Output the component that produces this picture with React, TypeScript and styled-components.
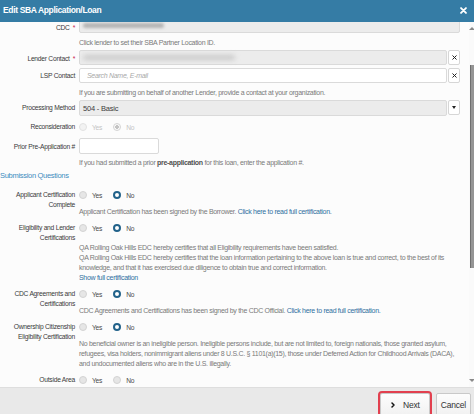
import styled, { createGlobalStyle } from 'styled-components';
import { ChevronRight } from 'lucide-react';

const GlobalStyle = createGlobalStyle`
  html, body {
    margin: 0;
    padding: 0;
    background: #fcfcfc;
  }
  body {
    font-family: "Liberation Sans", Arial, sans-serif;
  }
`;

const Dialog = styled.div`
  width: 474px;
  height: 414px;
  display: flex;
  flex-direction: column;
  overflow: hidden;
  background: #fcfcfc;
`;

const Header = styled.div`
  height: 22px;
  flex-shrink: 0;
  box-sizing: border-box;
  padding: 0 7px 2px 3px;
  display: flex;
  align-items: center;
  justify-content: space-between;
  background: #357ca5;
`;

const Title = styled.h4`
  margin: 0;
  color: #fff;
  font-size: 8.5px;
  letter-spacing: -0.35px;
  font-weight: 700;
`;

const Main = styled.div`
  flex: 1;
  min-height: 0;
  display: flex;
`;

const Body = styled.div`
  flex: 1;
  overflow: hidden;
  padding-right: 9px;
`;

const Content = styled.div`
  margin-top: -4px;
`;

const Scrollbar = styled.div`
  width: 5px;
  display: flex;
  flex-direction: column;
  align-items: flex-end;
  background: #fafafa;
`;

const Arrow = styled.span<{ $down?: boolean }>`
  width: 0;
  height: 0;
  margin-right: -1px;
  border-left: 3px solid transparent;
  border-right: 3px solid transparent;
  ${p => (p.$down ? 'border-top: 3px solid #8a8a8a;' : 'border-bottom: 3px solid #8a8a8a;')}
  margin-top: ${p => (p.$down ? 'auto' : '5px')};
  margin-bottom: ${p => (p.$down ? '5px' : '0')};
`;

const Thumb = styled.span<{ $top: number; $height: number }>`
  width: 4px;
  box-sizing: border-box;
  margin-top: ${p => p.$top}px;
  height: ${p => p.$height}px;
  background: #959595;
  border-left: 1px solid #6f6f6f;
`;

const Row = styled.div<{ $mt: number }>`
  display: grid;
  grid-template-columns: 75px 1fr;
  column-gap: 4px;
  margin-top: ${p => p.$mt}px;
`;

const Label = styled.div<{ $pt: number }>`
  padding-top: ${p => p.$pt}px;
  text-align: right;
  font-size: 6.7px;
  letter-spacing: -0.25px;
  line-height: 10.5px;
  color: #3a3a3a;
`;

const Required = styled.span`
  color: #c7254e;
  margin-left: 3px;
`;

const Control = styled.div`
  display: flex;
  flex-direction: column;
  min-width: 0;
`;

const Group = styled.div`
  display: flex;
  gap: 1px;
`;

const Field = styled.div<{ $filled?: boolean; $width?: number; $height?: number }>`
  box-sizing: border-box;
  height: ${p => p.$height ?? 15}px;
  flex: ${p => (p.$width ? 'none' : '1 1 auto')};
  ${p => (p.$width ? `width: ${p.$width}px;` : '')}
  min-width: 0;
  padding: 0 3px;
  display: flex;
  align-items: center;
  border: 1px solid #dadada;
  border-radius: 2px;
  background: ${p => (p.$filled ? '#ececec' : '#fff')};
  font-size: 7.5px;
  letter-spacing: -0.2px;
  color: #3c3c3c;
`;

const Addon = styled.div`
  box-sizing: border-box;
  width: 12px;
  height: 15px;
  flex: none;
  display: flex;
  align-items: center;
  justify-content: center;
  border: 1px solid #d6d6d6;
  border-radius: 2px;
  background: #fff;
`;

const Caret = styled.span`
  width: 0;
  height: 0;
  border-left: 2px solid transparent;
  border-right: 2px solid transparent;
  border-top: 3px solid #222;
`;

const Placeholder = styled.span`
  margin-left: 4px;
  font-style: italic;
  font-size: 7px;
  letter-spacing: -0.3px;
  color: #a9a9a9;
`;

const Redacted = styled.span<{ $width: number; $shade: string; $blur: number }>`
  display: block;
  width: ${p => p.$width}px;
  height: 5px;
  border-radius: 3px;
  background: ${p => p.$shade};
  filter: blur(${p => p.$blur}px);
`;

const Help = styled.div<{ $mt: number }>`
  margin-top: ${p => p.$mt}px;
  font-size: 7px;
  letter-spacing: -0.3px;
  line-height: 10px;
  color: #7a7a7a;
`;

const Strong = styled.b`
  color: #505050;
`;

const Link = styled.a`
  color: #2f6f9f;
  text-decoration: none;
`;

const Heading = styled.div<{ $mt: number }>`
  margin-top: ${p => p.$mt}px;
  font-size: 7.5px;
  letter-spacing: -0.3px;
  line-height: 12px;
  color: #3d8dbf;
`;

const Radios = styled.div`
  height: 14px;
  display: flex;
  align-items: center;
`;

const Option = styled.label`
  display: flex;
  align-items: center;
  gap: 5px;
  margin-right: 11px;
`;

const Circle = styled.span<{ $checked?: boolean; $disabled?: boolean }>`
  box-sizing: border-box;
  width: 8px;
  height: 8px;
  border-radius: 50%;
  ${p => {
    if (p.$disabled && p.$checked)
      return 'border: 1px solid #d4d4d4; background: radial-gradient(circle, #c4c4c4 0 1.6px, #fafafa 2px);';
    if (p.$disabled) return 'border: 1px solid #e2e2e2; background: #f2f2f2;';
    if (p.$checked) return 'border: 2.4px solid #22628a; background: #fff;';
    return 'border: 1px solid #d3d3d3; background: #e6e6e6;';
  }}
`;

const OptionText = styled.span<{ $disabled?: boolean }>`
  font-size: 6.7px;
  letter-spacing: -0.25px;
  color: ${p => (p.$disabled ? '#c4c4c4' : '#4a4a4a')};
`;

const Footer = styled.div`
  height: 27px;
  flex-shrink: 0;
  box-sizing: border-box;
  padding: 5px 3px 0 0;
  display: flex;
  align-items: flex-start;
  justify-content: flex-end;
  gap: 6px;
  background: #e9e9e9;
  border-top: 1px solid #dedede;
`;

const Button = styled.button<{ $highlight?: boolean }>`
  height: 24px;
  padding: 0 ${p => (p.$highlight ? 9 : 4)}px 0 ${p => (p.$highlight ? 8 : 4)}px;
  display: flex;
  align-items: center;
  gap: 6px;
  border: 1px solid #c9c9c9;
  border-radius: 2px;
  background: linear-gradient(#fdfdfd, #f1f1f1);
  font-family: inherit;
  font-size: 8.5px;
  letter-spacing: -0.2px;
  color: #333;
  ${p => (p.$highlight ? 'outline: 2px solid #e2404f; outline-offset: 0;' : '')}
`;

const Cross = ({ size, color, weight }: { size: number; color: string; weight: number }) => (
  <svg width={size} height={size} viewBox="0 0 10 10">
    <path d="M1.5 1.5 L8.5 8.5 M8.5 1.5 L1.5 8.5" stroke={color} strokeWidth={weight} strokeLinecap="round" />
  </svg>
);

const Radio = ({ checked, disabled, text }: { checked?: boolean; disabled?: boolean; text: string }) => (
  <Option>
    <Circle $checked={checked} $disabled={disabled} />
    <OptionText $disabled={disabled}>{text}</OptionText>
  </Option>
);

const YesNo = ({ yes, disabled }: { yes?: boolean; disabled?: boolean }) => (
  <Radios>
    <Radio text="Yes" checked={yes === true} disabled={disabled} />
    <Radio text="No" checked={yes === false} disabled={disabled} />
  </Radios>
);

const App = () => (
  <>
    <GlobalStyle />
    <Dialog>
      <Header>
        <Title>Edit SBA Application/Loan</Title>
        <Cross size={7} color="#fff" weight={2.6} />
      </Header>
      <Main>
        <Body>
          <Content>
            <Row $mt={0}>
              <Label $pt={4.5}>
                CDC<Required>*</Required>
              </Label>
              <Control>
                <Field $filled>
                  <Redacted $width={81} $shade="#b3b3b3" $blur={1.5} />
                </Field>
                <Help $mt={5}>Click lender to set their SBA Partner Location ID.</Help>
              </Control>
            </Row>

            <Row $mt={2}>
              <Label $pt={3.5}>
                Lender Contact<Required>*</Required>
              </Label>
              <Group>
                <Field $filled>
                  <Redacted $width={152} $shade="#c9c9c9" $blur={2.5} />
                </Field>
                <Addon>
                  <Cross size={5} color="#222" weight={2} />
                </Addon>
              </Group>
            </Row>

            <Row $mt={3}>
              <Label $pt={2.5}>LSP Contact</Label>
              <Control>
                <Group>
                  <Field>
                    <Placeholder>Search Name, E-mail</Placeholder>
                  </Field>
                  <Addon>
                    <Cross size={5} color="#222" weight={2} />
                  </Addon>
                </Group>
                <Help $mt={5}>
                  If you are submitting on behalf of another Lender, provide a contact at your organization.
                </Help>
              </Control>
            </Row>

            <Row $mt={2}>
              <Label $pt={3}>Processing Method</Label>
              <Group>
                <Field $filled $height={16}>504 - Basic</Field>
                <Addon>
                  <Caret />
                </Addon>
              </Group>
            </Row>

            <Row $mt={4}>
              <Label $pt={1.5}>Reconsideration</Label>
              <YesNo yes={false} disabled />
            </Row>

            <Row $mt={4}>
              <Label $pt={3.5}>Prior Pre-Application #</Label>
              <Control>
                <Field $width={80} $height={16} />
                <Help $mt={4}>
                  If you had submitted a prior <Strong>pre-application</Strong> for this loan, enter the application #.
                </Help>
              </Control>
            </Row>

            <Heading $mt={2}>Submission Questions</Heading>

            <Row $mt={6}>
              <Label $pt={1.5}>Applicant Certification Complete</Label>
              <Control>
                <YesNo yes={false} />
                <Help $mt={5}>
                  Applicant Certification has been signed by the Borrower. <Link>Click here to read full certification.</Link>
                </Help>
              </Control>
            </Row>

            <Row $mt={4}>
              <Label $pt={1.5}>Eligibility and Lender Certifications</Label>
              <Control>
                <YesNo yes={false} />
                <Help $mt={8}>
                  QA Rolling Oak Hills EDC hereby certifies that all Eligibility requirements have been satisfied.
                </Help>
                <Help $mt={0}>
                  QA Rolling Oak Hills EDC hereby certifies that the loan information pertaining to the above loan is
                  true and correct, to the best of its knowledge, and that it has exercised due diligence to obtain true
                  and correct information.
                </Help>
                <Help $mt={0}>
                  <Link>Show full certification</Link>
                </Help>
              </Control>
            </Row>

            <Row $mt={4}>
              <Label $pt={1.5}>CDC Agreements and Certifications</Label>
              <Control>
                <YesNo yes={false} />
                <Help $mt={5}>
                  CDC Agreements and Certifications has been signed by the CDC Official.{' '}
                  <Link>Click here to read full certification.</Link>
                </Help>
              </Control>
            </Row>

            <Row $mt={4}>
              <Label $pt={1.5}>Ownership Citizenship Eligibility Certification</Label>
              <Control>
                <YesNo yes={false} />
                <Help $mt={5}>
                  No beneficial owner is an ineligible person. Ineligible persons include, but are not limited to,
                  foreign nationals, those granted asylum, refugees, visa holders, nonimmigrant aliens under 8 U.S.C.
                  § 1101(a)(15), those under Deferred Action for Childhood Arrivals (DACA), and undocumented aliens
                  who are in the U.S. illegally.
                </Help>
              </Control>
            </Row>

            <Row $mt={4}>
              <Label $pt={1.5}>Outside Area</Label>
              <YesNo />
            </Row>
          </Content>
        </Body>
        <Scrollbar>
          <Arrow />
          <Thumb $top={35} $height={203} />
          <Arrow $down />
        </Scrollbar>
      </Main>
      <Footer>
        <Button $highlight>
          <ChevronRight size={8} strokeWidth={4.5} color="#111" />
          Next
        </Button>
        <Button>Cancel</Button>
      </Footer>
    </Dialog>
  </>
);

export default App;
